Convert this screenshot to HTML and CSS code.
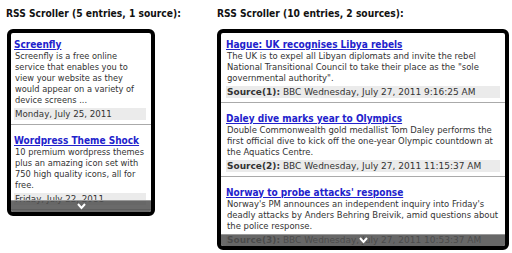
FILE: index.html
```html
<!DOCTYPE html>
<html lang="en">
<head>
    <meta charset="UTF-8">
    <title>RSS Scroller demo</title>
    <link rel="stylesheet" href="styles.css">
</head>
<body>
    <div class="demo">
        <div class="col col-small">
            <h3>RSS Scroller (5 entries, 1 source):</h3>
            <div class="scroller">
                <div class="entry">
                    <a href="#">Screenfly</a>
                    <p>Screenfly is a free online service that enables you to view your website as they would appear on a variety of device screens ...</p>
                    <div class="meta">Monday, July 25, 2011</div>
                </div>
                <div class="entry">
                    <a href="#">Wordpress Theme Shock</a>
                    <p>10 premium wordpress themes plus an amazing icon set with 750 high quality icons, all for free.</p>
                    <div class="meta">Friday, July 22, 2011</div>
                </div>
                <div class="more">
                    <svg width="9" height="7" viewBox="0 0 9 7"><path d="M1 1 L4.5 5 L8 1" fill="none" stroke="#fff" stroke-width="2"/></svg>
                </div>
            </div>
        </div>
        <div class="col col-wide">
            <h3>RSS Scroller (10 entries, 2 sources):</h3>
            <div class="scroller">
                <div class="entry">
                    <a href="#">Hague: UK recognises Libya rebels</a>
                    <p>The UK is to expel all Libyan diplomats and invite the rebel National Transitional Council to take their place as the "sole governmental authority".</p>
                    <div class="meta"><b>Source(1):</b> BBC Wednesday, July 27, 2011 9:16:25 AM</div>
                </div>
                <div class="entry">
                    <a href="#">Daley dive marks year to Olympics</a>
                    <p>Double Commonwealth gold medallist Tom Daley performs the first official dive to kick off the one-year Olympic countdown at the Aquatics Centre.</p>
                    <div class="meta"><b>Source(2):</b> BBC Wednesday, July 27, 2011 11:15:37 AM</div>
                </div>
                <div class="entry">
                    <a href="#">Norway to probe attacks' response</a>
                    <p>Norway's PM announces an independent inquiry into Friday's deadly attacks by Anders Behring Breivik, amid questions about the police response.</p>
                    <div class="meta"><b>Source(3):</b> BBC Wednesday, July 27, 2011 10:53:37 AM</div>
                </div>
                <div class="more">
                    <svg width="9" height="7" viewBox="0 0 9 7"><path d="M1 1 L4.5 5 L8 1" fill="none" stroke="#fff" stroke-width="2"/></svg>
                </div>
            </div>
        </div>
    </div>
</body>
</html>
```

FILE: styles.css
```css
body {
    margin: 0;
    font-family: "DejaVu Sans Condensed", "DejaVu Sans", sans-serif;
    color: #333;
    background: #fff;
}
.demo {
    display: flex;
    align-items: flex-start;
    padding: 8px 0 0 6px;
}
.col-small {
    flex: 0 0 150px;
    min-width: 0;
}
.col-wide {
    margin-left: 61px;
}
.col h3 {
    margin: 0 0 10px 0;
    font-size: 10.2px;
    line-height: 11px;
    white-space: nowrap;
    color: #111;
}
.col-small .scroller {
    margin-left: 1px;
    width: 140px;
    height: 179px;
}
.col-wide .scroller {
    width: 284px;
    height: 213px;
}
.col-wide .entry {
    padding-left: 5px;
}
.scroller {
    position: relative;
    overflow: hidden;
    border: 4px solid #000;
    border-radius: 6px;
    background: #fff;
    font-size: 9.4px;
    line-height: 11px;
}
.entry {
    padding: 10px 5px 4px 3px;
    border-bottom: 1px solid #aaa;
}
.entry:first-child {
    padding-top: 5.5px;
}
.col-small .entry p {
    margin-right: -3px;
    font-size: 9.2px;
}
.entry a {
    color: #22c;
    font-size: 10px;
    font-weight: bold;
    text-decoration: underline;
}
.entry p {
    margin: 0 0 0 1px;
}
.meta {
    margin-top: 3px;
    background: #ebebeb;
    line-height: 12px;
    padding-left: 1px;
    font-family: "DejaVu Sans", sans-serif;
    font-size: 9px;
    white-space: nowrap;
    overflow: hidden;
}
.col-small .meta {
    font-size: 8.7px;
}
.more {
    position: absolute;
    left: 0;
    right: 0;
    bottom: 0;
    height: 11px;
    background: rgba(80, 80, 80, 0.85);
    border-top: 1px solid #999;
    display: flex;
    justify-content: center;
    align-items: center;
}
```
